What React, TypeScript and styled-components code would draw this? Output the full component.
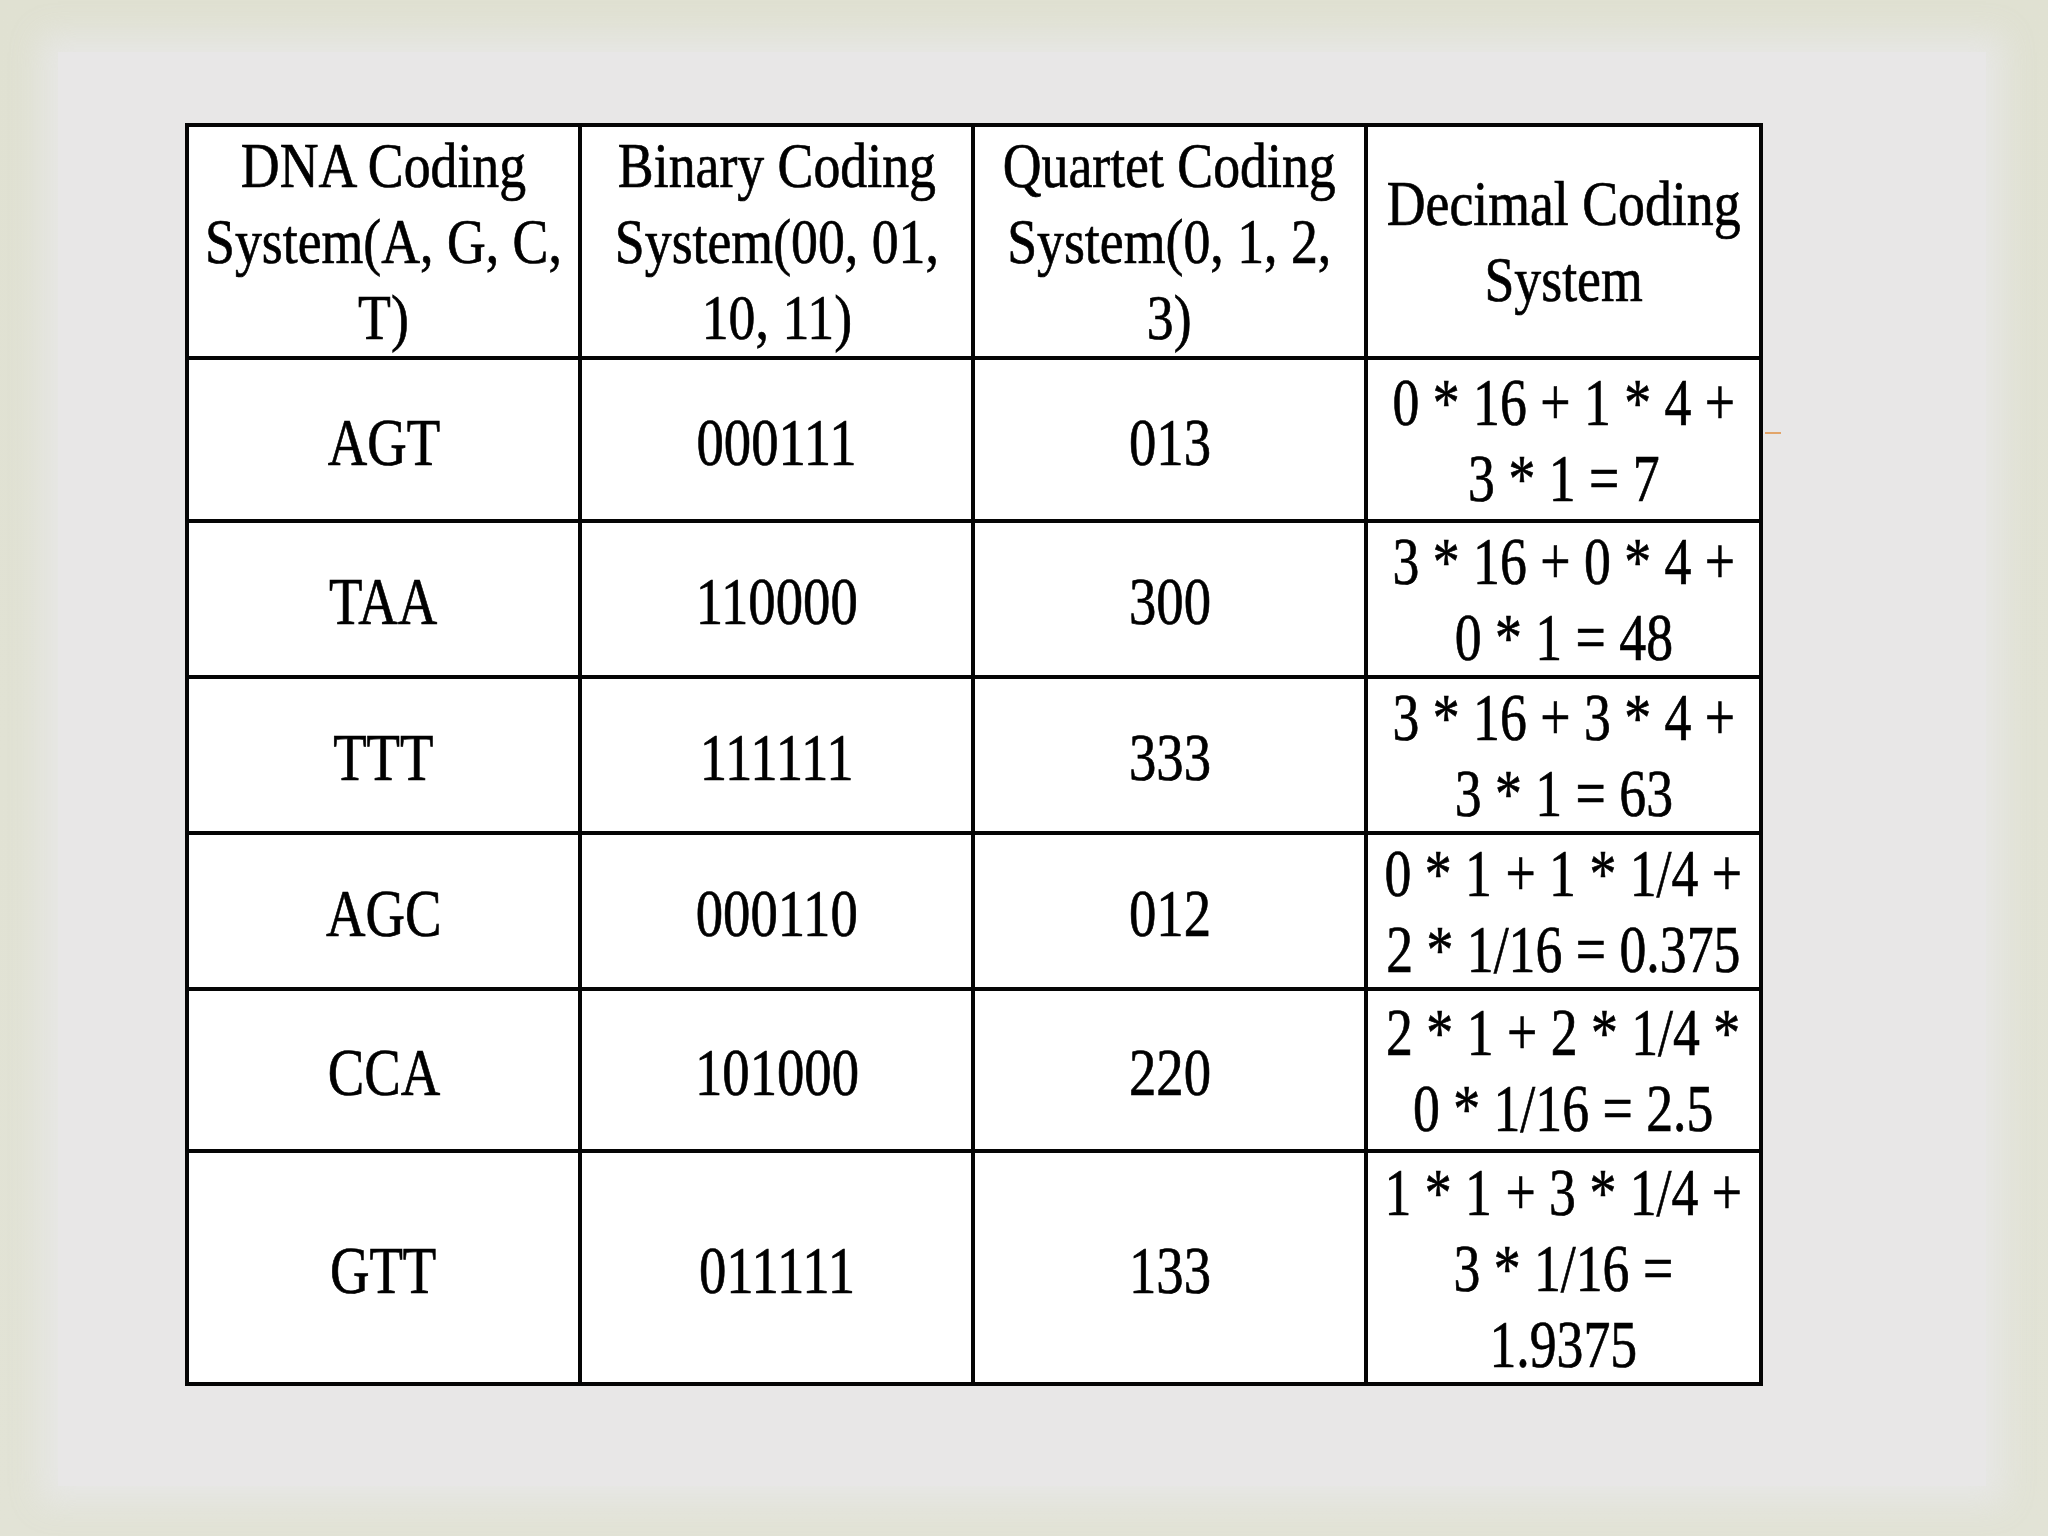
import * as React from 'react';
import styled, { createGlobalStyle } from 'styled-components';

interface Row {
    dna: string,
    binary: string,
    quartet: string,
    decimal: string[],
}

const headers: string[][] = [
    ['DNA Coding', 'System(A, G, C,', 'T)'],
    ['Binary Coding', 'System(00, 01,', '10, 11)'],
    ['Quartet Coding', 'System(0, 1, 2,', '3)'],
    ['Decimal Coding', 'System'],
];

const rows: Row[] = [
    { dna: 'AGT', binary: '000111', quartet: '013', decimal: ['0 * 16 + 1 * 4 +', '3 * 1 = 7'] },
    { dna: 'TAA', binary: '110000', quartet: '300', decimal: ['3 * 16 + 0 * 4 +', '0 * 1 = 48'] },
    { dna: 'TTT', binary: '111111', quartet: '333', decimal: ['3 * 16 + 3 * 4 +', '3 * 1 = 63'] },
    { dna: 'AGC', binary: '000110', quartet: '012', decimal: ['0 * 1 + 1 * 1/4 +', '2 * 1/16 = 0.375'] },
    { dna: 'CCA', binary: '101000', quartet: '220', decimal: ['2 * 1 + 2 * 1/4 *', '0 * 1/16 = 2.5'] },
    { dna: 'GTT', binary: '011111', quartet: '133', decimal: ['1 * 1 + 3 * 1/4 +', '3 * 1/16 =', '1.9375'] },
];

const lines = (parts: string[]) =>
    parts.map((p, i) => (
        <React.Fragment key={i}>
            {i > 0 && <br />}
            {p}
        </React.Fragment>
    ));

export default function App() {
    return (
        <>
            <GlobalStyle />
            <Page>
                <Slide>
                    <TableWrap>
                        <Table>
                            {headers.map((h, i) => (
                                <Cell key={'h' + i}>
                                    <HeadText>{lines(h)}</HeadText>
                                </Cell>
                            ))}
                            {rows.map((r) => (
                                <React.Fragment key={r.dna}>
                                    <Cell><BodyText>{r.dna}</BodyText></Cell>
                                    <Cell><BodyText>{r.binary}</BodyText></Cell>
                                    <Cell><BodyText>{r.quartet}</BodyText></Cell>
                                    <Cell><BodyText $narrow>{lines(r.decimal)}</BodyText></Cell>
                                </React.Fragment>
                            ))}
                        </Table>
                        <Tick />
                    </TableWrap>
                </Slide>
            </Page>
        </>
    );
}

const GlobalStyle = createGlobalStyle`
    html, body {
        margin: 0;
        padding: 0;
        background: #dfe0cf;
    }
    * {
        box-sizing: border-box;
    }
`

const Page = styled.div`
    width: 2048px;
    height: 1536px;
    padding: 52px 62px 50px 58px;
    background: linear-gradient(180deg, #e0e1d2 0%, #e2e3d6 100%);
    overflow: hidden;
`

const Slide = styled.div`
    height: 100%;
    padding: 71px 0 0 127px;
    background: #e8e7e7;
    box-shadow: 0 0 30px 18px rgba(232, 231, 231, 0.85);
`

const TableWrap = styled.div`
    position: relative;
    width: fit-content;
`

const Table = styled.div`
    display: grid;
    grid-template-columns: 389px 389px 389px 391px;
    grid-template-rows: 229px 159px 152px 152px 152px 158px 229px;
    gap: 4px;
    padding: 4px;
    background: #050505;
`

const Cell = styled.div`
    display: flex;
    align-items: center;
    justify-content: center;
    background: #fff;
`

const HeadText = styled.span`
    display: inline-block;
    font-family: "Liberation Serif", "Times New Roman", serif;
    font-size: 64px;
    line-height: 76px;
    color: #000;
    text-align: center;
    white-space: nowrap;
    -webkit-text-stroke: 0.7px #000;
    transform: scaleX(0.84);
`

const BodyText = styled.span<{ $narrow?: boolean }>`
    display: inline-block;
    margin-top: ${(p) => (p.$narrow ? 0 : 4)}px;
    font-family: "Liberation Serif", "Times New Roman", serif;
    font-size: 68px;
    line-height: ${(p) => (p.$narrow ? 76 : 78)}px;
    color: #000;
    text-align: center;
    white-space: nowrap;
    -webkit-text-stroke: 0.7px #000;
    transform: scaleX(${(p) => (p.$narrow ? 0.79 : 0.805)});
`

const Tick = styled.span`
    position: absolute;
    left: 1580px;
    top: 309px;
    width: 16px;
    height: 2px;
    background: #e2a56a;
`
